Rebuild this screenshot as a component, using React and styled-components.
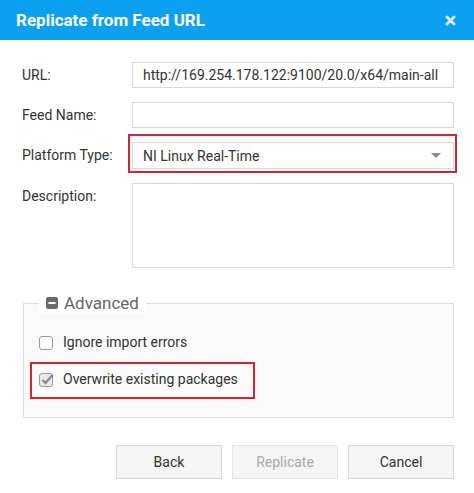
import React from 'react'
import styled, { createGlobalStyle } from 'styled-components'

const GlobalStyle = createGlobalStyle`
  html, body {
    margin: 0;
    padding: 0;
    background: #ffffff;
  }
  body {
    font-family: Roboto, "Liberation Sans", Arial, sans-serif;
    color: #333333;
  }
`

const Dialog = styled.div`
  width: 474px;
  height: 493px;
  background: #ffffff;
  display: flex;
  flex-direction: column;
`

const Header = styled.div`
  height: 40px;
  background: #0ba0f0;
  display: flex;
  align-items: center;
  justify-content: space-between;
  padding: 0 18px 0 16px;
`

const Title = styled.h1`
  margin: 0;
  font-size: 17px;
  font-weight: 700;
  color: #ffffff;
`

const CloseButton = styled.button`
  border: 0;
  background: transparent;
  padding: 0;
  width: 12px;
  height: 12px;
  display: flex;
  align-items: center;
  justify-content: center;
  cursor: pointer;
`

const Body = styled.div`
  padding: 22px 20px 0 22px;
  display: flex;
  flex-direction: column;
`

const FormRow = styled.div`
  display: grid;
  grid-template-columns: 110px 1fr;
  align-items: start;
  margin-bottom: 14px;
`

const Label = styled.label`
  font-size: 14px;
  line-height: 26px;
  color: #333333;
`

const TextInput = styled.input`
  box-sizing: border-box;
  width: 100%;
  height: 26px;
  border: 1px solid #d9d9d9;
  padding: 0 10px;
  font-family: inherit;
  font-size: 14px;
  color: #333333;
  outline: none;
`

const TextArea = styled.textarea`
  box-sizing: border-box;
  width: 100%;
  height: 85px;
  border: 1px solid #d9d9d9;
  padding: 6px 10px;
  font-family: inherit;
  font-size: 14px;
  resize: none;
  outline: none;
  display: block;
`

const Highlight = styled.div`
  position: relative;
  align-self: flex-start;
  &::after {
    content: '';
    position: absolute;
    top: ${(p) => p.$top}px;
    left: ${(p) => p.$left}px;
    right: ${(p) => p.$right}px;
    bottom: ${(p) => p.$bottom}px;
    border: 2px solid #d3252f;
    pointer-events: none;
  }
`

const Select = styled.div`
  box-sizing: border-box;
  height: 27px;
  border: 1px solid #d9d9d9;
  padding: 0 12px 0 10px;
  display: flex;
  align-items: center;
  justify-content: space-between;
  font-size: 14px;
  color: #333333;
`

const Caret = styled.span`
  width: 0;
  height: 0;
  border-left: 5px solid transparent;
  border-right: 5px solid transparent;
  border-top: 5px solid #8a8a8a;
`

const Fieldset = styled.fieldset`
  margin: 11px 0 0 1px;
  border: 1px solid #dcdcdc;
  background: #fafafa;
  padding: 17px 15px 26px 15px;
  min-width: 0;
`

const Legend = styled.legend`
  margin-left: 0;
  padding: 0 7px;
  display: flex;
  align-items: center;
  gap: 6px;
  font-size: 17px;
  line-height: 20px;
  color: #666666;
  background: #ffffff;
`

const CheckList = styled.div`
  display: flex;
  flex-direction: column;
  gap: 13px;
`

const CheckRow = styled.div`
  display: flex;
  align-items: center;
  gap: 9px;
  height: 24px;
  font-size: 14px;
  color: #333333;
  white-space: nowrap;
  width: ${(p) => (p.$wide ? '210px' : 'auto')};
`

const Footer = styled.div`
  display: flex;
  justify-content: flex-end;
  gap: 10px;
  padding: 27px 20px 0 0;
`

const Button = styled.button`
  box-sizing: border-box;
  width: 106px;
  height: 34px;
  background: #f5f5f5;
  border: 1px solid ${(p) => (p.disabled ? '#e6e6e6' : '#d6d6d6')};
  font-family: inherit;
  font-size: 14px;
  color: ${(p) => (p.disabled ? '#aaaaaa' : '#333333')};
  cursor: ${(p) => (p.disabled ? 'default' : 'pointer')};
`

const CloseIcon = () => (
  <svg width="11" height="11" viewBox="0 0 11 11">
    <path d="M2 2 L9 9 M9 2 L2 9" stroke="#dde8f2" strokeWidth="3" strokeLinecap="round" />
  </svg>
)

const MinusSquare = () => (
  <svg width="12" height="12" viewBox="0 0 12 12">
    <rect x="0" y="0" width="12" height="12" rx="2" fill="#6b6b6b" />
    <rect x="2.5" y="5" width="7" height="2" fill="#ffffff" />
  </svg>
)

const Checkbox = ({ checked }) => (
  <svg width="15" height="15" viewBox="0 0 15 15">
    <rect
      x="0.5"
      y="1.5"
      width="13"
      height="13"
      rx="2.5"
      fill={checked ? '#eaeaea' : '#ffffff'}
      stroke="#9a9a9a"
    />
    {checked && (
      <path d="M3.5 8 L6.5 11 L13.5 3" fill="none" stroke="#8c8c8c" strokeWidth="2.4" />
    )}
  </svg>
)

export default function App() {
  return (
    <>
      <GlobalStyle />
      <Dialog>
        <Header>
          <Title>Replicate from Feed URL</Title>
          <CloseButton aria-label="Close">
            <CloseIcon />
          </CloseButton>
        </Header>
        <Body>
          <FormRow>
            <Label>URL:</Label>
            <TextInput defaultValue="http://169.254.178.122:9100/20.0/x64/main-all" />
          </FormRow>
          <FormRow>
            <Label>Feed Name:</Label>
            <TextInput />
          </FormRow>
          <FormRow>
            <Label>Platform Type:</Label>
            <Highlight $top={-8} $left={-4} $right={-3} $bottom={-4}>
              <Select>
                NI Linux Real-Time
                <Caret />
              </Select>
            </Highlight>
          </FormRow>
          <FormRow>
            <Label>Description:</Label>
            <TextArea />
          </FormRow>
          <Fieldset>
            <Legend>
              <MinusSquare />
              Advanced
            </Legend>
            <CheckList>
              <CheckRow>
                <Checkbox />
                Ignore import errors
              </CheckRow>
              <Highlight $top={-5} $left={-9} $right={-6} $bottom={-8}>
                <CheckRow $wide>
                  <Checkbox checked />
                  Overwrite existing packages
                </CheckRow>
              </Highlight>
            </CheckList>
          </Fieldset>
        </Body>
        <Footer>
          <Button>Back</Button>
          <Button disabled>Replicate</Button>
          <Button>Cancel</Button>
        </Footer>
      </Dialog>
    </>
  )
}
